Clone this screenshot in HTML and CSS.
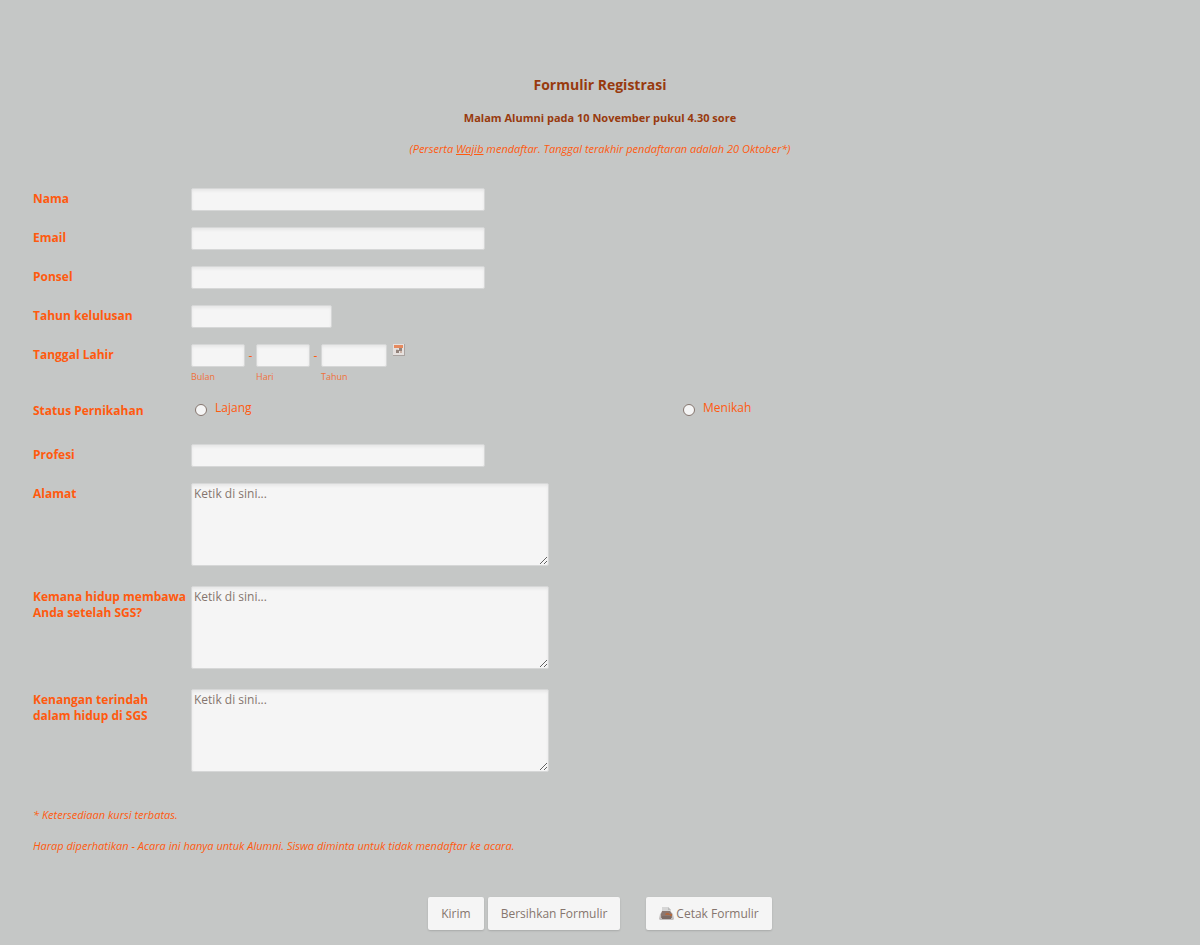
FILE: index.html
```
<!DOCTYPE html>
<html lang="id">
<head>
    <meta charset="UTF-8">
    <meta name="viewport" content="width=device-width, initial-scale=1.0">
    <title>Formulir Registrasi</title>
    <link rel="stylesheet" href="styles.css">
</head>
<body>
    <form class="form" action="#" method="post">
        <header class="form-header">
            <h1>Formulir Registrasi</h1>
            <h2>Malam Alumni pada 10 November pukul 4.30 sore</h2>
            <p class="note">(Perserta <u>Wajib</u> mendaftar. Tanggal terakhir pendaftaran adalah 20 Oktober*)</p>
        </header>

        <div class="form-group">
            <label class="form-label" for="nama">Nama</label>
            <input class="text-input" type="text" id="nama" name="nama">
        </div>
        <div class="form-group">
            <label class="form-label" for="email">Email</label>
            <input class="text-input" type="email" id="email" name="email">
        </div>
        <div class="form-group">
            <label class="form-label" for="ponsel">Ponsel</label>
            <input class="text-input" type="tel" id="ponsel" name="ponsel">
        </div>
        <div class="form-group">
            <label class="form-label" for="kelulusan">Tahun kelulusan</label>
            <input class="text-input short" type="text" id="kelulusan" name="kelulusan">
        </div>

        <div class="form-group" role="group" aria-labelledby="lahir">
            <span class="form-label" id="lahir">Tanggal Lahir</span>
            <div class="date">
                <div class="date-part">
                    <input class="text-input" type="text" id="bulan" name="bulan">
                    <label for="bulan">Bulan</label>
                </div>
                <span class="dash">-</span>
                <div class="date-part">
                    <input class="text-input" type="text" id="hari" name="hari">
                    <label for="hari">Hari</label>
                </div>
                <span class="dash">-</span>
                <div class="date-part year">
                    <input class="text-input" type="text" id="tahun" name="tahun">
                    <label for="tahun">Tahun</label>
                </div>
                <button class="calendar" type="button" aria-label="Pilih tanggal">
                    <svg width="12" height="12" viewBox="0 0 12 12">
                        <rect x="0" y="0" width="12" height="12" fill="#aaa3a0"/>
                        <rect x="0" y="0" width="11" height="11" fill="#e6e1df"/>
                        <rect x="1" y="1" width="9" height="3" fill="#e58a5f"/>
                        <rect x="6" y="4" width="3" height="3" fill="#94847d"/>
                        <rect x="3" y="6" width="3" height="3" fill="#94847d"/>
                        <rect x="7" y="7" width="2" height="2" fill="#cdb3a6"/>
                        <rect x="3" y="5" width="2" height="1" fill="#cfc8c5"/>
                    </svg>
                </button>
            </div>
        </div>

        <div class="form-group group-status" role="radiogroup" aria-labelledby="status">
            <span class="form-label" id="status">Status Pernikahan</span>
            <div class="radios">
                <div class="radio">
                    <input type="radio" id="lajang" name="status" value="lajang">
                    <label for="lajang">Lajang</label>
                </div>
                <div class="radio">
                    <input type="radio" id="menikah" name="status" value="menikah">
                    <label for="menikah">Menikah</label>
                </div>
            </div>
        </div>

        <div class="form-group">
            <label class="form-label" for="profesi">Profesi</label>
            <input class="text-input" type="text" id="profesi" name="profesi">
        </div>
        <div class="form-group group-area">
            <label class="form-label" for="alamat">Alamat</label>
            <textarea class="text-area" id="alamat" name="alamat" placeholder="Ketik di sini..."></textarea>
        </div>
        <div class="form-group group-area">
            <label class="form-label" for="hidup">Kemana hidup membawa Anda setelah SGS?</label>
            <textarea class="text-area" id="hidup" name="hidup" placeholder="Ketik di sini..."></textarea>
        </div>
        <div class="form-group group-area">
            <label class="form-label" for="kenangan">Kenangan terindah dalam hidup di SGS</label>
            <textarea class="text-area" id="kenangan" name="kenangan" placeholder="Ketik di sini..."></textarea>
        </div>

        <div class="form-notes">
            <p class="note">* Ketersediaan kursi terbatas.</p>
            <p class="note">Harap diperhatikan - Acara ini hanya untuk Alumni. Siswa diminta untuk tidak mendaftar ke acara.</p>
        </div>

        <div class="buttons">
            <button class="btn" type="submit">Kirim</button>
            <button class="btn" type="reset">Bersihkan Formulir</button>
            <button class="btn btn-print" type="button" onclick="window.print()">
                <svg width="15" height="15" viewBox="0 0 15 15">
                    <path d="M3 1h6l3 3v5H3z" fill="#d6d6d6"/>
                    <path d="M9 1v3h3z" fill="#bcbcbc"/>
                    <path d="M0 13l1-5 2-2h9l2 2 1 5-1 1H1z" fill="#c2bebd"/>
                    <path d="M3 5h8l2 3v4H2V8z" fill="#8b7770"/>
                    <path d="M7 7h3v1h3v2h-2V9H6z" fill="#b0683f"/>
                    <path d="M3 10h9v3H3z" fill="#7b6a64"/>
                </svg>
                Cetak Formulir
            </button>
        </div>
    </form>
</body>
</html>
```
FILE: styles.css
```
* {
    box-sizing: border-box;
}

body {
    margin: 0;
    background-color: #c5c7c6;
    color: #ff5a0f;
    font-family: "Open Sans", sans-serif;
    font-size: 12px;
    line-height: 16px;
}

.form {
    padding: 76px 33px 14px;
}

/* Header formulir */
.form-header {
    margin-bottom: 31px;
    text-align: center;
}

h1, h2 {
    margin: 0;
    color: #983a0e;
}

h1 {
    margin-bottom: 16px;
    font-size: 14px;
    line-height: 18px;
}

h2 {
    margin-bottom: 15px;
    font-size: 11px;
    line-height: 16px;
}

.note {
    margin: 0;
    font-size: 11px;
    font-style: italic;
}

.form-group {
    display: flex;
    align-items: flex-start;
    gap: 4px;
    margin-bottom: 16px;
}

.form-label {
    flex: none;
    width: 154px;
    padding-top: 3px;
    font-weight: bold;
}

.text-input, .text-area {
    border: 1px solid #d6d7d7;
    border-radius: 2px;
    background-color: #f5f5f5;
    box-shadow: inset 0 2px 3px rgba(0, 0, 0, 0.06);
    color: #85756e;
    font-family: inherit;
    font-size: 12px;
}

.text-input {
    width: 294px;
    max-width: 100%;
    height: 23px;
    padding: 2px;
}

.text-input.short {
    width: 141px;
}

.text-area {
    width: 358px;
    height: 83px;
    padding: 2px;
    line-height: 16px;
    resize: both;
}

.text-area::placeholder {
    color: #85756e;
    opacity: 1;
}

.group-area {
    margin-bottom: 20px;
}

/* Tanggal lahir */
.date {
    display: flex;
    align-items: flex-start;
}

.date-part {
    display: flex;
    flex-direction: column;
    gap: 3px;
    width: 54px;
    font-size: 9px;
    line-height: 14px;
}

.date-part label {
    color: #f0713a;
}

.date-part .text-input {
    width: 100%;
}

.date-part.year {
    width: 66px;
}

.dash {
    width: 11px;
    padding-top: 4px;
    text-align: center;
}

.calendar {
    display: flex;
    margin-left: 6px;
    padding: 0;
    border: none;
    background: none;
    cursor: pointer;
}

/* Status pernikahan */
.group-status {
    margin-bottom: 25px;
}

.radios {
    display: grid;
    grid-template-columns: 1fr 1fr;
    flex: 1;
}

.radio {
    display: flex;
    gap: 8px;
    padding-left: 4px;
}

.radio input {
    width: 12px;
    height: 12px;
    margin: 4px 0 0;
    appearance: none;
    border: 1px solid #85756e;
    border-radius: 50%;
    background-color: #f5f5f5;
}

.radio input:checked {
    border-width: 4px;
}

.form-notes {
    display: grid;
    gap: 15px;
    margin-top: 35px;
}

.buttons {
    display: flex;
    flex-wrap: wrap;
    justify-content: center;
    gap: 4px;
    margin-top: 43px;
}

.btn {
    display: flex;
    align-items: center;
    gap: 2px;
    height: 33px;
    padding: 0 13px;
    border: none;
    border-radius: 2px;
    background-color: #f5f5f5;
    box-shadow: 0 1px 2px rgba(0, 0, 0, 0.15);
    color: #85756e;
    font-family: inherit;
    font-size: 12px;
    cursor: pointer;
}

.btn-print {
    margin-left: 22px;
}
```
